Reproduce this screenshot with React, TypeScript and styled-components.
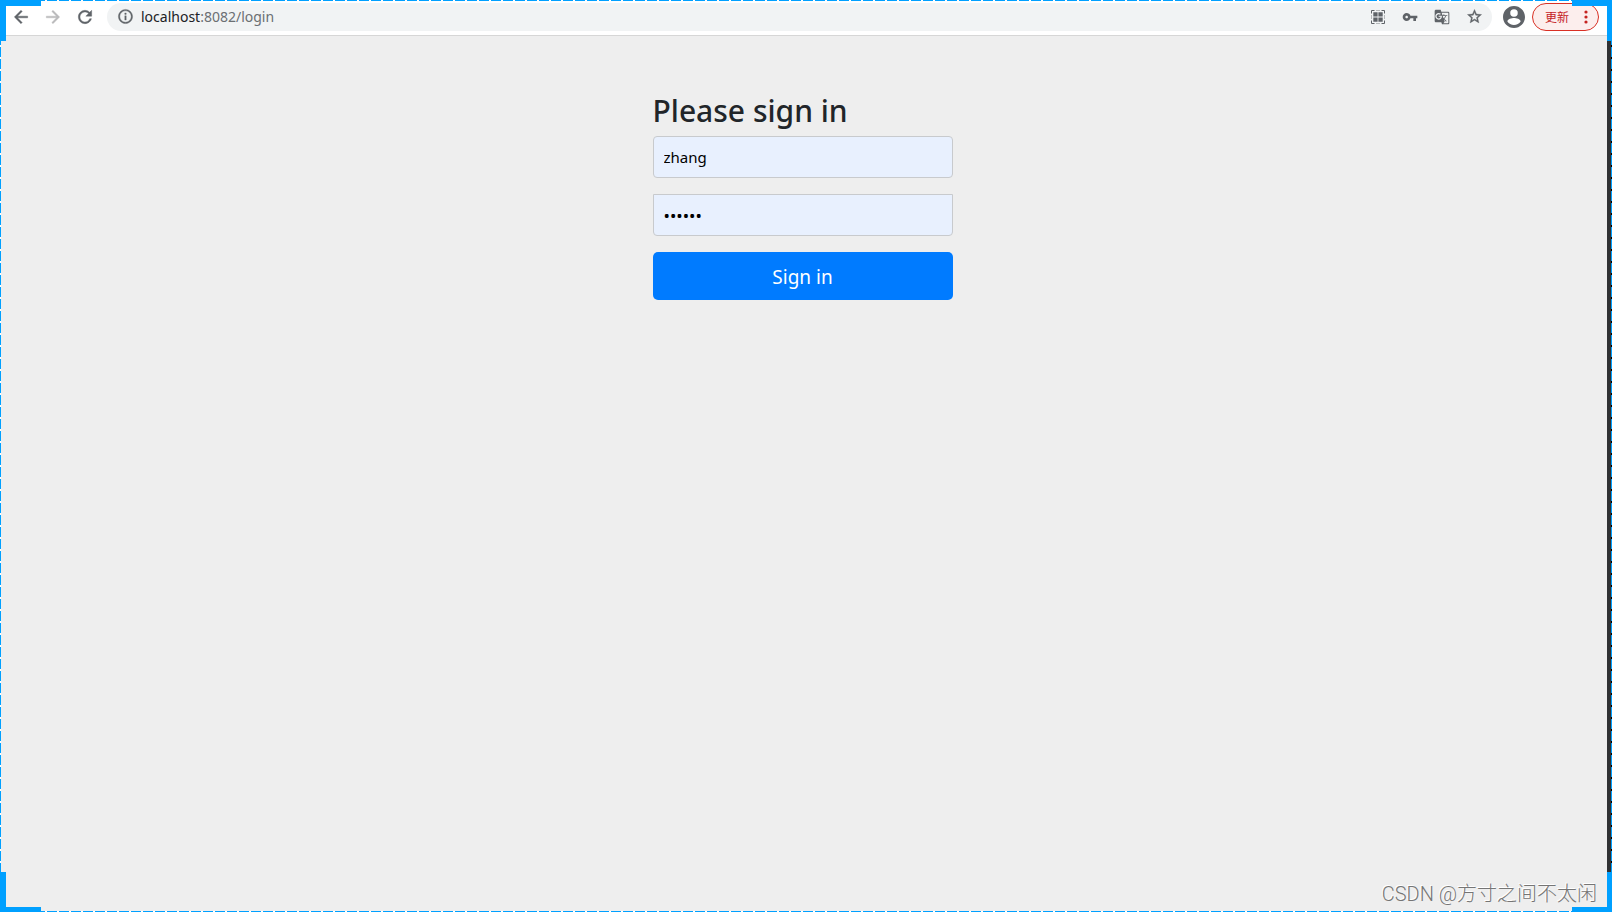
import React from 'react';
import styled, { createGlobalStyle, css } from 'styled-components';

const GlobalStyle = createGlobalStyle`
  *, *::before, *::after { box-sizing: border-box; }
  body { margin: 0; background: #eee; color: #212529; font-family: "Noto Sans", "Open Sans", "Noto Sans CJK SC", sans-serif; }
  button, input { font: inherit; }
`;

const BLUE = '#00a0ff';

const Screen = styled.div`
  position: relative;
  min-height: 100vh;
  display: flex;
  overflow: hidden;
`;

const Browser = styled.div`
  flex: 1;
  min-width: 0;
  display: flex;
  flex-direction: column;
  background: #eee;
`;

const Backdrop = styled.div`
  width: 5px;
  background: #2f3133;
`;

const Toolbar = styled.header`
  height: 36px;
  padding: 0 8px 2px 10px;
  display: flex;
  align-items: center;
  background: #fff;
  border-bottom: 1px solid #d6d6d6;
`;

const IconButton = styled.button<{ $color?: string }>`
  width: 22px;
  height: 28px;
  padding: 0;
  border: 0;
  background: none;
  display: flex;
  align-items: center;
  justify-content: center;
  flex: none;
  color: ${(p) => p.$color ?? '#5f6368'};
`;

const NavGroup = styled.nav`
  display: flex;
  gap: 10px;
  margin-right: 11px;
`;

const AddressBar = styled.div`
  flex: 1;
  min-width: 0;
  height: 28px;
  padding: 0 7px;
  display: flex;
  align-items: center;
  gap: 5px;
  border-radius: 14px;
  background: #f1f3f4;
`;

const Url = styled.a`
  flex: 1;
  font-size: 14px;
  line-height: 20px;
  color: #6b6f73;
  text-decoration: none;
  strong { font-weight: 400; color: #202124; }
`;

const AddressActions = styled.div`
  display: flex;
  gap: 10px;
`;

const Profile = styled(IconButton)`
  margin: 0 7px 0 11px;
`;

const UpdateButton = styled.button`
  height: 28px;
  width: 67px;
  padding: 0 10px 0 12px;
  display: flex;
  align-items: center;
  justify-content: space-between;
  border: 1px solid #d93025;
  border-radius: 14px;
  background: #fceeed;
  color: #c5221f;
  font-family: "Noto Sans CJK SC", sans-serif;
  font-size: 12px;
  line-height: 18px;
`;

const Main = styled.main`
  flex: 1;
  display: flex;
  flex-direction: column;
  align-items: center;
  padding: 56px 10px 0 8px;
`;

const Form = styled.form`
  width: 100%;
  max-width: 300px;
  display: flex;
  flex-direction: column;
`;

const Title = styled.h2`
  margin: 0 0 6px;
  font-size: 30px;
  font-weight: 500;
  line-height: 38px;
`;

const Field = styled.input<{ $squareTop?: boolean }>`
  width: 100%;
  height: 42px;
  margin: 0 0 16px;
  padding: 10px;
  border: 1px solid #c8cacd;
  border-radius: ${(p) => (p.$squareTop ? '0 0 4px 4px' : '4px')};
  background: #e8f0fe;
  color: #000;
  font-size: ${(p) => (p.type === 'password' ? 17 : 15)}px;
  line-height: 20px;
  outline: none;
`;

const SubmitButton = styled.button`
  height: 48px;
  padding: 2px 0 0;
  border: 0;
  border-radius: 5px;
  background: #007bff;
  color: #fff;
  font-size: 19px;
  line-height: 30px;
`;

const Watermark = styled.footer`
  align-self: flex-end;
  margin: 0 10px 5px 0;
  font-family: Roboto, "Noto Sans CJK SC", sans-serif;
  font-size: 20px;
  font-weight: 300;
  line-height: 26px;
  color: #757575;
  text-shadow: -1px -1px 0 #fff;
`;

const Edge = styled.span<{ $side: 'top' | 'right' | 'bottom' | 'left' }>`
  position: absolute;
  pointer-events: none;
  ${(p) => {
    const horizontal = p.$side === 'top' || p.$side === 'bottom';
    const gap = p.$side === 'right' ? '#000' : '#fff';
    return css`
      ${p.$side}: 0;
      ${horizontal ? 'left: 0; right: 0; height: 1px;' : 'top: 0; bottom: 0; width: 1px;'}
      background: repeating-linear-gradient(${horizontal ? '90deg' : '180deg'},
        ${BLUE} 0 9px, ${gap} 9px 11px, ${BLUE} 11px 12px);
    `;
  }}
`;

const Corner = styled.span<{ $v: 'top' | 'bottom'; $h: 'left' | 'right' }>`
  position: absolute;
  pointer-events: none;
  width: ${(p) => (p.$h === 'left' ? 41 : 40)}px;
  height: ${(p) => (p.$v === 'top' ? 41 : 40)}px;
  ${(p) => css`
    ${p.$v}: 0;
    ${p.$h}: 0;
    border-${p.$v}: ${p.$v === 'top' ? 6 : 5}px solid ${BLUE};
    border-${p.$h}: ${p.$h === 'left' ? 6 : 5}px solid ${BLUE};
  `}
`;

const Glyph = ({ d, size = 20, bold = false }: { d: string; size?: number; bold?: boolean }) => (
  <svg
    width={size}
    height={size}
    viewBox="0 0 24 24"
    fill="currentColor"
    stroke={bold ? 'currentColor' : 'none'}
    strokeWidth={0.5}
    aria-hidden="true"
  >
    <path d={d} />
  </svg>
);

const icons = {
  back: 'M20 11H7.83l5.59-5.59L12 4l-8 8 8 8 1.41-1.41L7.83 13H20v-2z',
  forward: 'M12 4l-1.41 1.41L16.17 11H4v2h12.17l-5.58 5.59L12 20l8-8z',
  reload:
    'M17.65 6.35C16.2 4.9 14.21 4 12 4c-4.42 0-7.99 3.58-7.99 8s3.57 8 7.99 8c3.73 0 6.84-2.55 7.73-6h-2.08c-.82 2.33-3.04 4-5.65 4-3.31 0-6-2.69-6-6s2.69-6 6-6c1.66 0 3.14.69 4.22 1.78L13 11h7V4l-2.35 2.35z',
  info: 'M11 7h2v2h-2zm0 4h2v6h-2zm1-9C6.48 2 2 6.48 2 12s4.48 10 10 10 10-4.48 10-10S17.52 2 12 2zm0 18c-4.41 0-8-3.59-8-8s3.59-8 8-8 8 3.59 8 8-3.59 8-8 8z',
  key: 'M12.65 10C11.83 7.67 9.61 6 7 6c-3.31 0-6 2.69-6 6s2.69 6 6 6c2.61 0 4.83-1.67 5.65-4H17v4h4v-4h2v-4H12.65zM7 14c-1.1 0-2-.9-2-2s.9-2 2-2 2 .9 2 2-.9 2-2 2z',
  star: 'M22 9.24l-7.19-.62L12 2 9.19 8.63 2 9.24l5.46 4.73L5.82 21 12 17.27 18.18 21l-1.63-7.03L22 9.24zM12 15.4l-3.76 2.27 1-4.28-3.32-2.88 4.38-.38L12 6.1l1.71 4.04 4.38.38-3.32 2.88 1 4.28L12 15.4z',
  person:
    'M12 0C5.37 0 0 5.37 0 12s5.37 12 12 12 12-5.37 12-12S18.63 0 12 0zm0 3.6a4.1 4.1 0 1 1 0 8.2 4.1 4.1 0 0 1 0-8.2zm0 17.2c-3 0-5.7-1.5-7.2-3.9 0-2.4 4.8-3.7 7.2-3.7s7.2 1.3 7.2 3.7c-1.5 2.4-4.2 3.9-7.2 3.9z',
  translate:
    'M21 4H11l-1-3H3c-1.1 0-2 .9-2 2v15c0 1.1.9 2 2 2h8l1 3h9c1.1 0 2-.9 2-2V6c0-1.1-.9-2-2-2zM7 16c-2.76 0-5-2.24-5-5s2.24-5 5-5c1.35 0 2.48.5 3.35 1.3L9.03 8.57c-.38-.36-1.04-.78-2.03-.78-1.74 0-3.15 1.44-3.15 3.21S5.26 14.21 7 14.21c2.01 0 2.84-1.44 2.92-2.41H7v-1.71h4.68c.07.31.12.61.12 1.02C11.8 13.97 9.89 16 7 16zm6.17-5.42h3.7c-.43 1.25-1.11 2.43-2.05 3.47-.31-.35-.6-.72-.86-1.1l-.79-2.37zm8.33 9.92c0 .55-.45 1-1 1H14l2-2.5-1.04-3.1 3.1 3.1.92-.92-3.3-3.25.02-.02c1.13-1.25 1.93-2.69 2.4-4.22H20v-1.3h-4.53V8h-1.29v1.29h-1.44L11.46 5.5h9.04c.55 0 1 .45 1 1v14z',
};

const QrIcon = () => (
  <svg width="16" height="16" viewBox="0 0 16 16" aria-hidden="true">
    <path d="M1.5 4.5v-3h3M11.5 1.5h3v3M14.5 11.5v3h-3M4.5 14.5h-3v-3" fill="none" stroke="currentColor" />
    <path d="M6 1.5h4M6 14.5h4M1.5 6v4M14.5 6v4" stroke="currentColor" opacity=".4" />
    <path d="M3.3 3.3h4.3v4.3H3.3zM8.400 3.300h4.300v4.300H8.400zM3.300 8.400h4.300v4.300H3.300zM8.400 8.400h4.300v4.300H8.400z" fill="currentColor" />
  </svg>
);

const DotsIcon = () => (
  <svg width="4" height="14" viewBox="0 0 4 14" fill="currentColor" aria-hidden="true">
    <circle cx="2" cy="2" r="1.6" />
    <circle cx="2" cy="7" r="1.6" />
    <circle cx="2" cy="12" r="1.6" />
  </svg>
);

export default function App() {
  return (
    <Screen>
      <GlobalStyle />
      <Browser>
        <Toolbar>
          <NavGroup>
            <IconButton aria-label="Back"><Glyph d={icons.back} bold /></IconButton>
            <IconButton aria-label="Forward" $color="#bababc"><Glyph d={icons.forward} bold /></IconButton>
            <IconButton aria-label="Reload"><Glyph d={icons.reload} bold /></IconButton>
          </NavGroup>
          <AddressBar>
            <IconButton aria-label="Site information"><Glyph d={icons.info} size={17} bold /></IconButton>
            <Url href="#"><strong>localhost</strong>:8082/login</Url>
            <AddressActions>
              <IconButton aria-label="QR code"><QrIcon /></IconButton>
              <IconButton aria-label="Passwords"><Glyph d={icons.key} size={16} /></IconButton>
              <IconButton aria-label="Translate"><Glyph d={icons.translate} size={16} /></IconButton>
              <IconButton aria-label="Bookmark"><Glyph d={icons.star} size={17} bold /></IconButton>
            </AddressActions>
          </AddressBar>
          <Profile aria-label="Profile"><Glyph d={icons.person} size={22} /></Profile>
          <UpdateButton>更新<DotsIcon /></UpdateButton>
        </Toolbar>
        <Main>
          <Form onSubmit={(e) => e.preventDefault()}>
            <Title>Please sign in</Title>
            <Field aria-label="Username" type="text" defaultValue="zhang" />
            <Field aria-label="Password" type="password" defaultValue="123456" $squareTop />
            <SubmitButton type="submit">Sign in</SubmitButton>
          </Form>
        </Main>
        <Watermark>CSDN @方寸之间不太闲</Watermark>
      </Browser>
      <Backdrop />
      <Edge $side="top" />
      <Edge $side="right" />
      <Edge $side="bottom" />
      <Edge $side="left" />
      <Corner $v="top" $h="left" />
      <Corner $v="top" $h="right" />
      <Corner $v="bottom" $h="left" />
      <Corner $v="bottom" $h="right" />
    </Screen>
  );
}
